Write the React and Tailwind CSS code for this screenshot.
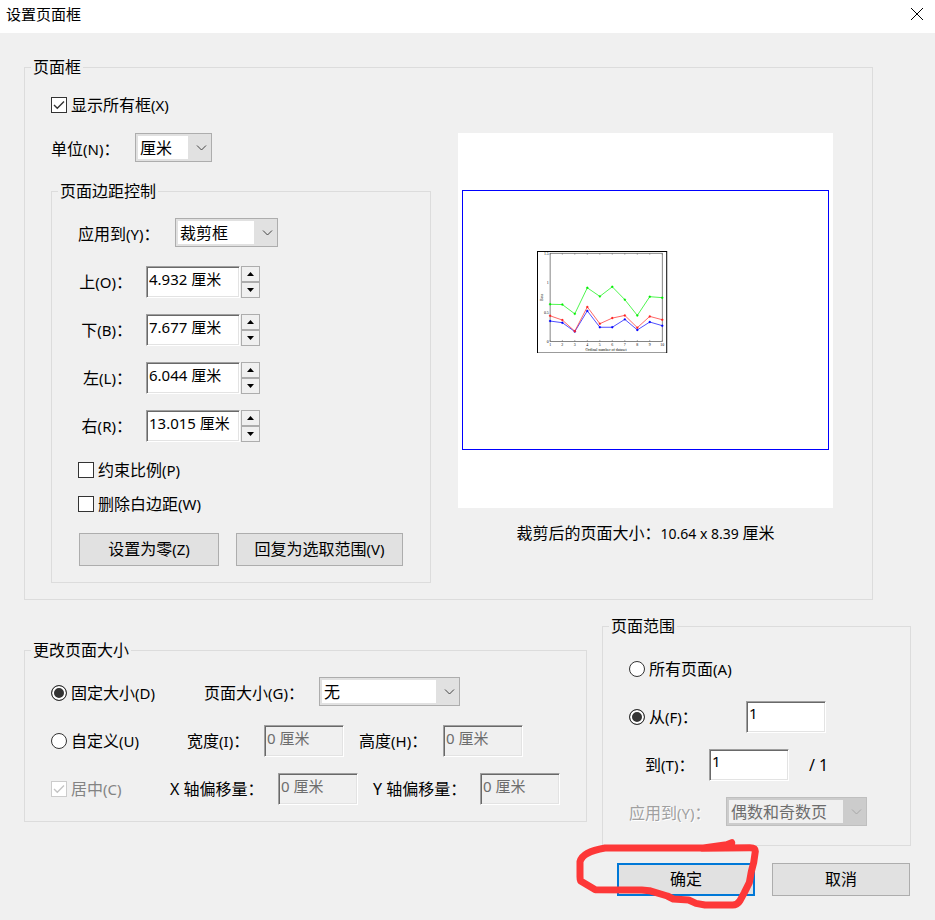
import React, { useState } from 'react'

const X_POINTS = [13.3, 25.7, 38.3, 51, 63.7, 76.3, 89, 101.7, 114.3, 127]

const SERIES = [
  {
    color: '#00f000',
    values: [54, 54.3, 63.7, 37.3, 46, 36.3, 49.3, 65.3, 46.3, 47.3],
  },
  {
    color: '#0000ff',
    values: [71, 72.7, 81.7, 60.7, 77.3, 77.3, 69.3, 80, 72, 75.7],
  },
  {
    color: '#ff2020',
    values: [65.7, 70, 81.3, 56.7, 73.7, 68, 65.3, 77.7, 66.3, 69.7],
  },
]

const MARGINS = [
  { id: 'top', name: '上', hotkey: 'O', value: '4.932 厘米' },
  { id: 'bottom', name: '下', hotkey: 'B', value: '7.677 厘米' },
  { id: 'left', name: '左', hotkey: 'L', value: '6.044 厘米' },
  { id: 'right', name: '右', hotkey: 'R', value: '13.015 厘米' },
]

function Caption({ name, hotkey, colon }) {
  return (
    <>
      {name}
      <span className="text-[15px] leading-5">({hotkey})</span>
      {colon && '：'}
    </>
  )
}

function Group({ title, className, children }) {
  return (
    <fieldset className={`min-w-0 border border-[#dcdcdc] ${className}`}>
      <legend className="ml-1.5 px-0.5 leading-5">{title}</legend>
      {children}
    </fieldset>
  )
}

function Checkbox({ checked, disabled, onChange, children }) {
  return (
    <label
      className={`flex h-5 items-center gap-1 ${disabled ? 'text-[#838383]' : ''}`}
    >
      <span className="relative size-4 shrink-0">
        <input
          type="checkbox"
          checked={checked}
          disabled={disabled}
          onChange={onChange}
          className="block size-4 appearance-none border border-[#333] bg-white disabled:border-[#ccc]"
        />
        {checked && (
          <svg
            viewBox="0 0 16 16"
            className="pointer-events-none absolute inset-0 size-4"
            fill="none"
            stroke={disabled ? '#c4c4c4' : '#333'}
            strokeWidth="1.4"
          >
            <path d="M3 8l3.3 3.3L13 4.6" />
          </svg>
        )}
      </span>
      <span>{children}</span>
    </label>
  )
}

function Radio({ name, checked, onChange, className = '', children }) {
  return (
    <label className={`flex items-center gap-1 ${className}`}>
      <input
        type="radio"
        name={name}
        checked={checked}
        onChange={onChange}
        className="size-4 shrink-0 appearance-none rounded-full border border-[#333] bg-white checked:bg-[#333] checked:shadow-[inset_0_0_0_2px_#fff]"
      />
      <span>{children}</span>
    </label>
  )
}

function Select({ id, options, disabled, className }) {
  return (
    <div
      className={`flex h-[29px] shrink-0 items-center self-start border p-0.5 ${
        disabled ? 'border-[#bfbfbf] bg-[#ccc]' : 'border-[#adadad] bg-[#e1e1e1]'
      } ${className}`}
    >
      <select
        id={id}
        disabled={disabled}
        className="h-full min-w-0 flex-1 appearance-none bg-white pl-0.5 leading-5 outline-none disabled:bg-[#f0f0f0] disabled:text-[#6d6d6d] disabled:opacity-100"
      >
        {options.map((option) => (
          <option key={option}>{option}</option>
        ))}
      </select>
      <svg
        viewBox="0 0 21 12"
        className="h-3 w-[21px] shrink-0"
        fill="none"
        stroke={disabled ? '#a8a8a8' : '#444'}
      >
        <path d="M9 3.5l4.5 4.5L18 3.5" />
      </svg>
    </div>
  )
}

function TextBox({ className = 'w-20', ...props }) {
  return (
    <input
      type="text"
      className={`h-8 shrink-0 border border-t-[#a0a0a0] border-r-white border-b-white border-l-[#a0a0a0] bg-white px-0.5 pb-2 text-[15px] shadow-[inset_1px_1px_0_#696969,inset_-1px_-1px_0_#e3e3e3] outline-none disabled:bg-[#f0f0f0] disabled:text-[#6d6d6d] ${className}`}
      {...props}
    />
  )
}

function Spinner({ label }) {
  const button =
    'flex h-4 w-[19px] items-center justify-center border border-[#adadad] bg-[#f0f0f0]'
  return (
    <div className="ml-px flex flex-col">
      <button type="button" aria-label={`${label} +`} className={button}>
        <svg viewBox="0 0 7 4" className="h-1 w-[7px]">
          <path d="M0 4L3.5 0L7 4z" />
        </svg>
      </button>
      <button type="button" aria-label={`${label} -`} className={button}>
        <svg viewBox="0 0 7 4" className="h-1 w-[7px]">
          <path d="M0 0L3.5 4L7 0z" />
        </svg>
      </button>
    </div>
  )
}

function PushButton({ primary, className, children }) {
  return (
    <button
      type="button"
      className={`h-[33px] bg-[#e1e1e1] pb-0.5 ${
        primary ? 'border-2 border-[#0078d7]' : 'border border-[#adadad]'
      } ${className}`}
    >
      {children}
    </button>
  )
}

function CropChart() {
  return (
    <svg viewBox="0 0 132 104" className="w-full bg-white">
      <rect x="0.5" y="0.5" width="131" height="103" fill="none" stroke="#000" />
      <rect
        x="13.3"
        y="2.3"
        width="113.7"
        height="89.4"
        fill="none"
        stroke="#666"
        strokeWidth="0.8"
      />
      {X_POINTS.map((x, i) => (
        <g key={x}>
          <path
            d={`M${x} 91.7v-1.5M${x} 2.3v1.5`}
            stroke="#555"
            strokeWidth="0.5"
          />
          <text x={x} y="96.6" fontSize="4" textAnchor="middle">
            {i + 1}
          </text>
        </g>
      ))}
      {['0', '0.5', '1', '1.5'].map((tick, i) => (
        <text key={tick} x="12" y={93 - i * 29.6} fontSize="4" textAnchor="end">
          {tick}
        </text>
      ))}
      <text x="70" y="101" fontSize="4" textAnchor="middle">
        Ordinal number of dataset
      </text>
      <text
        transform="translate(6 47) rotate(-90)"
        fontSize="4"
        textAnchor="middle"
      >
        Beta
      </text>
      {SERIES.map(({ color, values }) => (
        <g key={color} fill={color} stroke={color}>
          <polyline
            fill="none"
            strokeWidth="0.7"
            points={values.map((y, i) => `${X_POINTS[i]},${y}`).join(' ')}
          />
          {values.map((y, i) => (
            <circle key={i} cx={X_POINTS[i]} cy={y} r="1" strokeWidth="0.3" />
          ))}
        </g>
      ))}
    </svg>
  )
}

function PagePreview() {
  return (
    <div className="flex aspect-square w-full items-center bg-white px-1 pb-px">
      <div className="aspect-[367/260] w-full border border-[#0000ff] pt-[16%] pl-[20%]">
        <div className="w-[45%] pt-px pl-px font-['Liberation_Serif',serif]">
          <CropChart />
        </div>
      </div>
    </div>
  )
}

function RedMark() {
  return (
    <svg
      viewBox="0 0 600 270"
      className="pointer-events-none absolute -top-[33px] -left-[57px] h-[90px] w-[200px] max-w-none"
      fill="none"
      stroke="#fd3838"
      strokeWidth="21"
      strokeLinecap="round"
      strokeLinejoin="round"
    >
      <path d="M515 38L500 44L425 55L570 53Q586 53 586 64L581 98L574 125L568 158L553 188L540 212Q532 225 518 225L435 225L408 220L386 210L340 207L322 198L268 182L245 180L106 179L62 153Q60 148 60 140L60 95Q64 80 82 70Q100 60 135 54L430 54" />
    </svg>
  )
}

function App() {
  const [showAll, setShowAll] = useState(true)
  const [constrain, setConstrain] = useState(false)
  const [removeWhite, setRemoveWhite] = useState(false)
  const [sizeMode, setSizeMode] = useState('fixed')
  const [rangeMode, setRangeMode] = useState('from')

  return (
    <div className="min-h-screen bg-[#f0f0f0] font-['Noto_Sans','Noto_Sans_CJK_SC',sans-serif] text-base leading-5 text-black">
      <header className="flex h-[33px] items-center justify-between bg-white pr-[11px] pb-1.5 pl-1.5">
        <h1 className="text-[15px]">设置页面框</h1>
        <button type="button" aria-label="关闭">
          <svg viewBox="0 0 14 14" className="size-3.5" stroke="#000" fill="none">
            <path d="M1 1l12 12M13 1L1 13" />
          </svg>
        </button>
      </header>

      <main className="px-6 pt-6">
        <Group title="页面框" className="mr-[38px] pb-4">
          <div className="flex gap-[27px] pr-[39px] pl-[26px]">
            <div className="w-[380px] shrink-0 pt-[18px]">
              <Checkbox
                checked={showAll}
                onChange={() => setShowAll(!showAll)}
              >
                <Caption name="显示所有框" hotkey="X" />
              </Checkbox>
              <div className="mt-[18px] flex h-8 items-center">
                <label htmlFor="unit" className="w-[84px]">
                  <Caption name="单位" hotkey="N" colon />
                </label>
                <Select
                  id="unit"
                  className="w-[77px]"
                  options={['厘米', '毫米', '英寸']}
                />
              </div>

              <Group title="页面边距控制" className="mt-4 pb-4">
                <div className="flex flex-col gap-4 px-[26px] pt-[17px]">
                  <div className="flex h-8 items-center">
                    <label htmlFor="apply-box" className="w-[97px]">
                      <Caption name="应用到" hotkey="Y" colon />
                    </label>
                    <Select
                      id="apply-box"
                      className="w-[103px]"
                      options={['裁剪框', '作品框', '裁切框', '出血框']}
                    />
                  </div>
                  {MARGINS.map(({ id, name, hotkey, value }) => (
                    <div key={id} className="flex items-center">
                      <label
                        htmlFor={id}
                        className="mr-3.5 flex w-[54px] justify-end whitespace-nowrap"
                      >
                        <Caption name={name} hotkey={hotkey} colon />
                      </label>
                      <TextBox
                        id={id}
                        defaultValue={value}
                        className="w-[94px]"
                      />
                      <Spinner label={name} />
                    </div>
                  ))}
                </div>
                <div className="flex flex-col gap-3.5 px-[26px] pt-[18px]">
                  <Checkbox
                    checked={constrain}
                    onChange={() => setConstrain(!constrain)}
                  >
                    <Caption name="约束比例" hotkey="P" />
                  </Checkbox>
                  <Checkbox
                    checked={removeWhite}
                    onChange={() => setRemoveWhite(!removeWhite)}
                  >
                    <Caption name="删除白边距" hotkey="W" />
                  </Checkbox>
                </div>
                <div className="mt-[19px] flex gap-[17px] px-[27px]">
                  <PushButton className="w-[140px]">
                    <Caption name="设置为零" hotkey="Z" />
                  </PushButton>
                  <PushButton className="w-[167px]">
                    <Caption name="回复为选取范围" hotkey="V" />
                  </PushButton>
                </div>
              </Group>
            </div>

            <div className="min-w-0 flex-1 pt-14">
              <PagePreview />
              <p className="mt-[15px] text-center whitespace-nowrap">
                裁剪后的页面大小：
                <span className="text-sm leading-5">10.64 x 8.39 </span>
                厘米
              </p>
            </div>
          </div>
        </Group>

        <div className="flex items-start gap-[15px] pt-4">
          <Group title="更改页面大小" className="mt-6 flex-1 pb-4">
            <div className="flex flex-col gap-4 pt-[17px] pl-[26px] whitespace-nowrap">
              <div className="flex h-8 items-center">
                <Radio
                  name="size"
                  className="w-[153px]"
                  checked={sizeMode === 'fixed'}
                  onChange={() => setSizeMode('fixed')}
                >
                  <Caption name="固定大小" hotkey="D" />
                </Radio>
                <label htmlFor="page-size" className="w-[115px]">
                  <Caption name="页面大小" hotkey="G" colon />
                </label>
                <Select
                  id="page-size"
                  className="w-[141px]"
                  options={['无', 'A4', 'A3']}
                />
              </div>
              <div className="flex h-8 items-center">
                <Radio
                  name="size"
                  className="w-[136px]"
                  checked={sizeMode === 'custom'}
                  onChange={() => setSizeMode('custom')}
                >
                  <Caption name="自定义" hotkey="U" />
                </Radio>
                <label htmlFor="width" className="w-[77px]">
                  <Caption name="宽度" hotkey="I" colon />
                </label>
                <TextBox id="width" defaultValue="0 厘米" disabled />
                <label htmlFor="height" className="ml-[15px] w-[84px]">
                  <Caption name="高度" hotkey="H" colon />
                </label>
                <TextBox id="height" defaultValue="0 厘米" disabled />
              </div>
              <div className="flex h-8 items-center">
                <div className="w-[119px]">
                  <Checkbox checked disabled>
                    <Caption name="居中" hotkey="C" />
                  </Checkbox>
                </div>
                <label htmlFor="offset-x" className="w-[108px]">
                  X 轴偏移量：
                </label>
                <TextBox id="offset-x" defaultValue="0 厘米" disabled />
                <label htmlFor="offset-y" className="ml-[15px] w-[107px]">
                  Y 轴偏移量：
                </label>
                <TextBox id="offset-y" defaultValue="0 厘米" disabled />
              </div>
            </div>
          </Group>

          <div className="w-[309px] shrink-0">
            <Group title="页面范围" className="pb-4">
              <div className="flex flex-col gap-4 pt-[17px] pl-[26px] whitespace-nowrap">
                <Radio
                  name="range"
                  className="h-8"
                  checked={rangeMode === 'all'}
                  onChange={() => setRangeMode('all')}
                >
                  <Caption name="所有页面" hotkey="A" />
                </Radio>
                <div className="flex h-8 items-center">
                  <Radio
                    name="range"
                    className="w-[117px]"
                    checked={rangeMode === 'from'}
                    onChange={() => setRangeMode('from')}
                  >
                    <Caption name="从" hotkey="F" colon />
                  </Radio>
                  <TextBox aria-label="从" defaultValue="1" />
                </div>
                <div className="flex h-8 items-center pl-4">
                  <label htmlFor="to" className="w-16">
                    <Caption name="到" hotkey="T" colon />
                  </label>
                  <TextBox id="to" defaultValue="1" />
                  <span className="ml-5">/ 1</span>
                </div>
                <div className="flex h-8 items-center">
                  <label
                    htmlFor="apply-pages"
                    className="w-[97px] text-[#a0a0a0] [text-shadow:1px_1px_0_#fff]"
                  >
                    <Caption name="应用到" hotkey="Y" colon />
                  </label>
                  <Select
                    id="apply-pages"
                    className="w-[141px]"
                    options={['偶数和奇数页']}
                    disabled
                  />
                </div>
              </div>
            </Group>
            <div className="mt-[17px] flex justify-end gap-[17px] pr-px">
              <div className="relative">
                <PushButton primary className="w-[138px]">
                  确定
                </PushButton>
                <RedMark />
              </div>
              <PushButton className="w-[138px]">取消</PushButton>
            </div>
          </div>
        </div>
      </main>
    </div>
  )
}

export default App
